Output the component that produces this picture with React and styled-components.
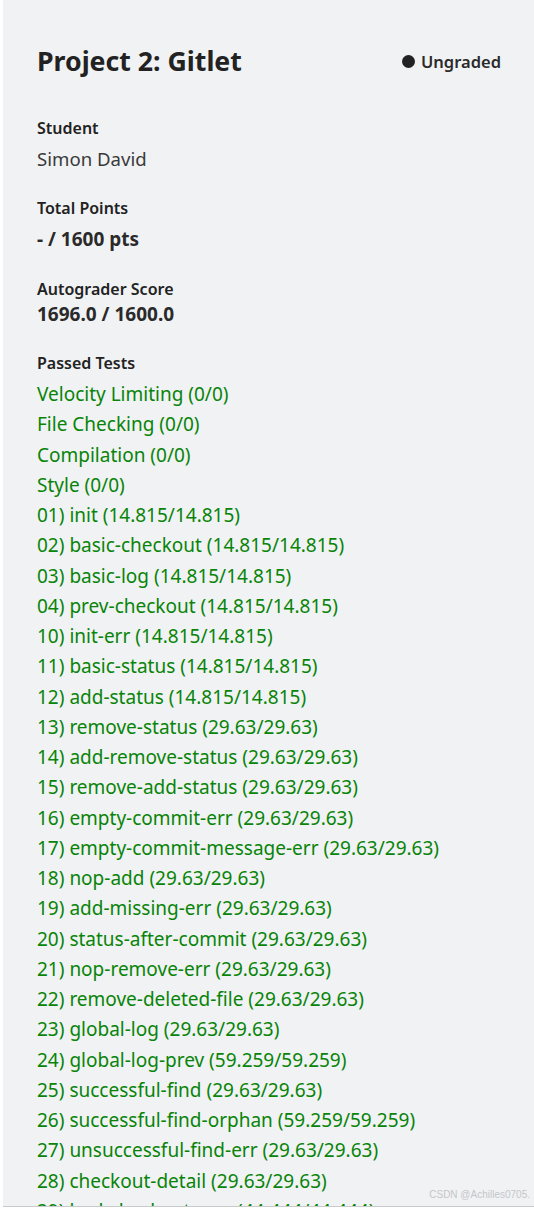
import React from "react";
import styled, { createGlobalStyle } from "styled-components";

const TESTS = [
  "Velocity Limiting (0/0)",
  "File Checking (0/0)",
  "Compilation (0/0)",
  "Style (0/0)",
  "01) init (14.815/14.815)",
  "02) basic-checkout (14.815/14.815)",
  "03) basic-log (14.815/14.815)",
  "04) prev-checkout (14.815/14.815)",
  "10) init-err (14.815/14.815)",
  "11) basic-status (14.815/14.815)",
  "12) add-status (14.815/14.815)",
  "13) remove-status (29.63/29.63)",
  "14) add-remove-status (29.63/29.63)",
  "15) remove-add-status (29.63/29.63)",
  "16) empty-commit-err (29.63/29.63)",
  "17) empty-commit-message-err (29.63/29.63)",
  "18) nop-add (29.63/29.63)",
  "19) add-missing-err (29.63/29.63)",
  "20) status-after-commit (29.63/29.63)",
  "21) nop-remove-err (29.63/29.63)",
  "22) remove-deleted-file (29.63/29.63)",
  "23) global-log (29.63/29.63)",
  "24) global-log-prev (59.259/59.259)",
  "25) successful-find (29.63/29.63)",
  "26) successful-find-orphan (59.259/59.259)",
  "27) unsuccessful-find-err (29.63/29.63)",
  "28) checkout-detail (29.63/29.63)",
  "29) bad-checkouts-err (44.444/44.444)",
];

const GlobalStyle = createGlobalStyle`
  html, body {
    margin: 0;
    padding: 0;
    background: #fff;
  }
  body {
    font-family: "Noto Sans", "Open Sans", sans-serif;
    -webkit-font-smoothing: antialiased;
  }
`;

const Page = styled.div`
  height: 1206px;
  overflow: hidden;
  margin-left: 3px;
  background: #f1f2f4;
  border-bottom: 1px solid #c9cacc;
  position: relative;
`;

const Panel = styled.section`
  padding: 41px 33px 0 34px;
`;

const Header = styled.header`
  display: flex;
  align-items: center;
  justify-content: space-between;
  margin-bottom: 35px;
`;

const Title = styled.h1`
  margin: 0;
  font-size: 26.7px;
  font-weight: 700;
  color: #222;
  line-height: 40px;
`;

const Status = styled.div`
  display: flex;
  align-items: center;
  gap: 6px;
  font-size: 16.5px;
  font-weight: 600;
  color: #2a2a2a;
`;

const Dot = styled.span`
  width: 13px;
  height: 13px;
  border-radius: 50%;
  background: #222;
`;

const Field = styled.div`
  margin-bottom: ${(p) => p.$gap || 22}px;
`;

const Label = styled.div`
  font-size: 16px;
  font-weight: 600;
  color: #222;
  line-height: 24px;
  margin-bottom: ${(p) => (p.$tight ? 0 : 4)}px;
`;

const Value = styled.div`
  font-size: ${(p) => (p.$bold ? 19 : 18.6)}px;
  font-weight: ${(p) => (p.$bold ? 700 : 400)};
  color: ${(p) => (p.$bold ? "#2a2a2a" : "#3a3a3a")};
  line-height: ${(p) => p.$lh || 30}px;
`;

const TestList = styled.ul`
  list-style: none;
  margin: 0;
  padding: 0;
`;

const TestItem = styled.li`
  font-size: 19px;
  line-height: 30.25px;
  color: #088408;
  white-space: nowrap;
`;

const Watermark = styled.span`
  position: absolute;
  right: 4px;
  bottom: 6px;
  font-family: "Liberation Sans", Arial, sans-serif;
  font-size: 10px;
  color: #c4c6ca;
`;

export default function App() {
  return (
    <>
      <GlobalStyle />
      <Page>
        <Panel>
          <Header>
            <Title>Project 2: Gitlet</Title>
            <Status>
              <Dot />
              Ungraded
            </Status>
          </Header>

          <Field>
            <Label>Student</Label>
            <Value>Simon David</Value>
          </Field>

          <Field $gap={23}>
            <Label>Total Points</Label>
            <Value $bold>- / 1600 pts</Value>
          </Field>

          <Field $gap={24}>
            <Label $tight>Autograder Score</Label>
            <Value $bold $lh={26}>
              1696.0 / 1600.0
            </Value>
          </Field>

          <Field>
            <Label>Passed Tests</Label>
            <TestList>
              {TESTS.map((t) => (
                <TestItem key={t}>{t}</TestItem>
              ))}
            </TestList>
          </Field>
        </Panel>
        <Watermark>CSDN @Achilles0705.</Watermark>
      </Page>
    </>
  );
}
